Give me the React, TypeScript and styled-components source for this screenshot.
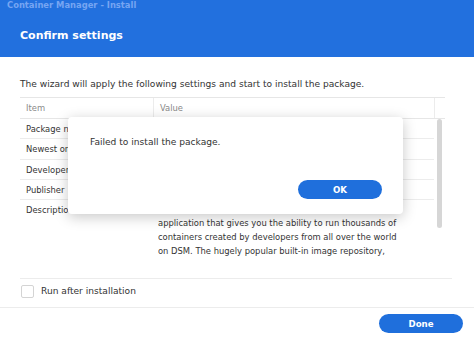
import styled, { createGlobalStyle } from "styled-components"

const GlobalStyle = createGlobalStyle`
  html, body {
    margin: 0;
    padding: 0;
    background: #fff;
  }
  body {
    font-family: "DejaVu Sans", Verdana, sans-serif;
    color: #333;
  }
`

type Row = {
  item: string
  value: string
}

const rows: Row[] = [
  { item: "Package name", value: "Container Manager" },
  { item: "Newest online version", value: "20.10.23-1437" },
  { item: "Developer", value: "Docker Inc." },
  { item: "Publisher", value: "Synology Inc." },
]

const description = [
  "Container Manager is a lightweight virtualization",
  "application that gives you the ability to run thousands of",
  "containers created by developers from all over the world",
  "on DSM. The hugely popular built-in image repository,",
]

export default function App() {
  return (
    <Window>
      <GlobalStyle />
      <Header>
        <Caption>Container Manager - Install</Caption>
        <Title>Confirm settings</Title>
      </Header>

      <Body>
        <Intro>
          The wizard will apply the following settings and start to install the
          package.
        </Intro>
        <Table>
          <HeadRow>
            <HeadCell>Item</HeadCell>
            <HeadCell $divider>Value</HeadCell>
            <HeadCell $divider />
          </HeadRow>
          <Scroller>
            <RowsArea>
              {rows.map((r) => (
                <DataRow key={r.item}>
                  <Cell>{r.item}</Cell>
                  <Cell $value>{r.value}</Cell>
                </DataRow>
              ))}
              <DataRow $tall>
                <Cell>Description</Cell>
                <Cell $value>
                  {description.map((line) => (
                    <Line key={line}>{line}</Line>
                  ))}
                </Cell>
              </DataRow>
            </RowsArea>
            <ScrollTrack>
              <ScrollThumb />
            </ScrollTrack>
          </Scroller>
        </Table>
        <Divider />
        <CheckRow>
          <Checkbox />
          <CheckLabel>Run after installation</CheckLabel>
        </CheckRow>
      </Body>

      <Footer>
        <PillButton>Done</PillButton>
      </Footer>

      <Alert>
        <AlertText>Failed to install the package.</AlertText>
        <AlertActions>
          <PillButton>OK</PillButton>
        </AlertActions>
      </Alert>
    </Window>
  )
}

const Window = styled.div`
  position: relative;
  width: 474px;
  height: 338px;
  overflow: hidden;
  display: flex;
  flex-direction: column;
  background: #fff;
`

const Header = styled.div`
  height: 57px;
  background-color: #2270de;
  padding: 0 20px;
  box-sizing: border-box;
  position: relative;
`

const Caption = styled.div`
  position: absolute;
  left: 7px;
  top: -1px;
  font-size: 8.4px;
  line-height: 12px;
  font-weight: bold;
  color: #76a5f2;
  white-space: nowrap;
`

const Title = styled.div`
  padding-top: 29px;
  font-size: 11px;
  font-weight: bold;
  color: #fff;
  line-height: 14px;
`

const Body = styled.div`
  padding: 0 22px 0 20px;
  flex: 1;
  display: flex;
  flex-direction: column;
`

const Intro = styled.div`
  margin-top: 20px;
  font-size: 9.1px;
  line-height: 14px;
  color: #333;
  white-space: nowrap;
`

const Table = styled.div`
  margin-top: 6px;
  width: 425px;
  border-top: 1px solid #e6e6e6;
`

const HeadRow = styled.div`
  display: grid;
  grid-template-columns: 133px 281px 11px;
  height: 20px;
  border-bottom: 1px solid #e6e6e6;
`

const HeadCell = styled.div<{ $divider?: boolean }>`
  font-size: 8.4px;
  line-height: 20px;
  color: #8a8a8a;
  padding-left: 6px;
  border-left: ${(p) => (p.$divider ? "1px solid #ececec" : "none")};
`

const Scroller = styled.div`
  display: flex;
  height: 142px;
  overflow: hidden;
`

const RowsArea = styled.div`
  width: 414px;
`

const DataRow = styled.div<{ $tall?: boolean }>`
  display: grid;
  grid-template-columns: 138px 1fr;
  min-height: 20px;
  border-bottom: ${(p) => (p.$tall ? "none" : "1px solid #ececec")};
  box-sizing: border-box;
  height: ${(p) => (p.$tall ? "auto" : "20.3px")};
`

const Cell = styled.div<{ $value?: boolean }>`
  font-size: 8.4px;
  line-height: 20px;
  color: #333;
  padding-left: ${(p) => (p.$value ? "0" : "6px")};
  white-space: nowrap;
  overflow: hidden;
`

const Line = styled.div`
  line-height: 14.4px;
  &:first-child {
    margin-top: 1px;
  }
`

const ScrollTrack = styled.div`
  width: 11px;
  display: flex;
  justify-content: center;
`

const ScrollThumb = styled.div`
  width: 5px;
  height: 109px;
  border-radius: 3px;
  background: #d6d6d6;
`

const Divider = styled.div`
  margin-top: 17px;
  width: 432px;
  border-top: 1px solid #ececec;
`

const CheckRow = styled.div`
  display: flex;
  align-items: center;
  gap: 7px;
  margin-top: 6px;
  padding-left: 1px;
`

const Checkbox = styled.div`
  width: 11px;
  height: 11px;
  border: 1px solid #d4d4d4;
  border-radius: 2px;
  background: #fff;
`

const CheckLabel = styled.div`
  font-size: 9.1px;
  color: #333;
  line-height: 13px;
`

const Footer = styled.div`
  height: 31px;
  border-top: 1.5px solid #ececec;
  display: flex;
  justify-content: flex-end;
  align-items: flex-start;
  padding: 6px 11px 0 0;
  box-sizing: border-box;
`

const PillButton = styled.button`
  width: 84px;
  height: 19px;
  border: none;
  border-radius: 10px;
  background: #1f6fdc;
  color: #fff;
  font-family: "DejaVu Sans", Verdana, sans-serif;
  font-size: 8.6px;
  font-weight: bold;
  padding: 0;
  cursor: pointer;
`

const Alert = styled.div`
  position: absolute;
  left: 68px;
  top: 117px;
  width: 335px;
  height: 97px;
  background: #fff;
  border-radius: 4px;
  box-shadow: 0 3px 14px rgba(0, 0, 0, 0.22);
  box-sizing: border-box;
  padding: 18px 21px 15px 22px;
  display: flex;
  flex-direction: column;
  justify-content: space-between;
`

const AlertText = styled.div`
  font-size: 9.1px;
  line-height: 14px;
  color: #333;
`

const AlertActions = styled.div`
  display: flex;
  justify-content: flex-end;
`
